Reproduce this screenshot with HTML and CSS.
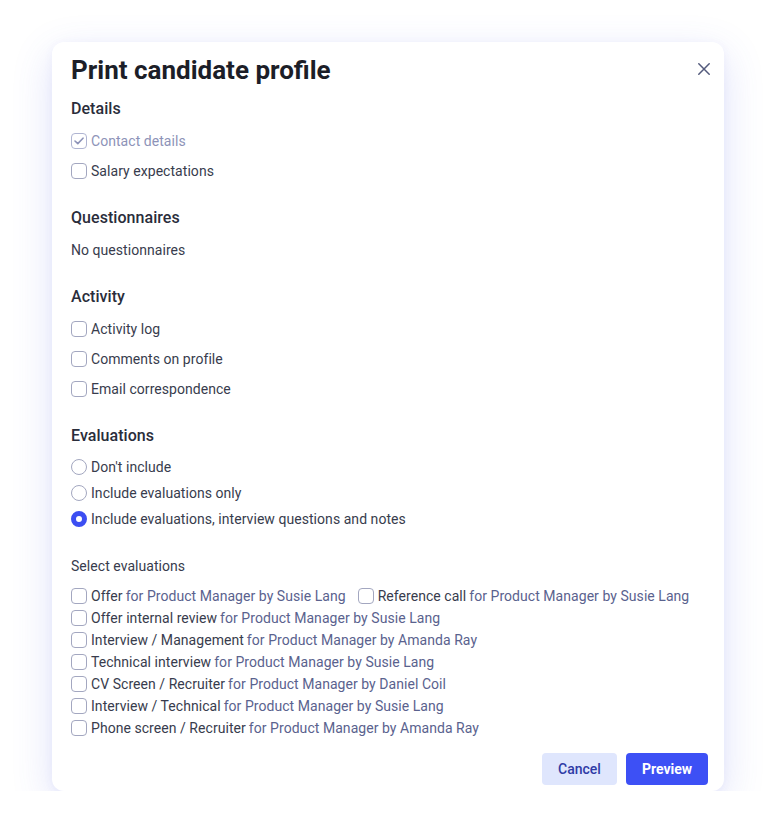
FILE: index.html
```html
<!DOCTYPE html>
<html lang="en">
<head>
<meta charset="utf-8">
<title>Print candidate profile</title>
<link rel="stylesheet" href="styles.css">
</head>
<body>
<div class="modal">
  <div class="modal-head">
    <h1 class="title">Print candidate profile</h1>
    <button class="close" aria-label="Close">
      <svg width="12" height="12" viewBox="0 0 12 12"><path d="M0.8 0.8L11.2 11.2M11.2 0.8L0.8 11.2" stroke="#535a7c" stroke-width="1.5" stroke-linecap="round"/></svg>
    </button>
  </div>

  <section class="section">
    <h2 class="heading">Details</h2>
    <div class="list">
      <label class="row disabled"><span class="box checked"><svg width="10" height="8" viewBox="0 0 10 8"><path d="M1 4L3.8 6.6L9 1.2" fill="none" stroke="#8d93b8" stroke-width="1.6" stroke-linecap="round" stroke-linejoin="round"/></svg></span>Contact details</label>
      <label class="row"><span class="box"></span>Salary expectations</label>
    </div>
  </section>

  <section class="section">
    <h2 class="heading">Questionnaires</h2>
    <div class="list">
      <p class="row">No questionnaires</p>
    </div>
  </section>

  <section class="section">
    <h2 class="heading">Activity</h2>
    <div class="list">
      <label class="row"><span class="box"></span>Activity log</label>
      <label class="row"><span class="box"></span>Comments on profile</label>
      <label class="row"><span class="box"></span>Email correspondence</label>
    </div>
  </section>

  <section class="section">
    <h2 class="heading">Evaluations</h2>
    <div class="radios">
      <label class="radio-row"><span class="radio"></span>Don't include</label>
      <label class="radio-row"><span class="radio"></span>Include evaluations only</label>
      <label class="radio-row"><span class="radio on"></span>Include evaluations, interview questions and notes</label>
    </div>
  </section>

  <section class="evals">
    <p class="sub">Select evaluations</p>
    <div class="eval-list">
      <div class="eval-line">
        <label class="eval"><span class="box"></span>Offer <span class="muted">for Product Manager by Susie Lang</span></label>
        <label class="eval"><span class="box"></span>Reference call <span class="muted">for Product Manager by Susie Lang</span></label>
      </div>
      <label class="eval"><span class="box"></span>Offer internal review <span class="muted">for Product Manager by Susie Lang</span></label>
      <label class="eval"><span class="box"></span>Interview / Management <span class="muted">for Product Manager by Amanda Ray</span></label>
      <label class="eval"><span class="box"></span>Technical interview <span class="muted">for Product Manager by Susie Lang</span></label>
      <label class="eval"><span class="box"></span>CV Screen / Recruiter <span class="muted">for Product Manager by Daniel Coil</span></label>
      <label class="eval"><span class="box"></span>Interview / Technical <span class="muted">for Product Manager by Susie Lang</span></label>
      <label class="eval"><span class="box"></span>Phone screen / Recruiter <span class="muted">for Product Manager by Amanda Ray</span></label>
    </div>
  </section>

  <div class="actions">
    <button class="btn btn-cancel">Cancel</button>
    <button class="btn btn-primary">Preview</button>
  </div>
</div>
</body>
</html>
```

FILE: styles.css
```css
* { box-sizing: border-box; }
html, body { margin: 0; padding: 0; background: #ffffff; }
body {
  font-family: Roboto, "Noto Sans", "Liberation Sans", sans-serif;
  color: #383c4d;
  font-size: 14px;
  letter-spacing: 0.05px;
}
.modal {
  width: 672px;
  margin: 42px 0 0 52px;
  background: #fff;
  border-radius: 12px;
  padding: 12px 16px 6px 19px;
  box-shadow: 0 12px 40px rgba(80, 92, 225, 0.18), 0 2px 10px rgba(80, 92, 225, 0.06);
}
.modal-head {
  display: flex;
  justify-content: space-between;
  align-items: center;
  height: 32px;
}
.title {
  margin: 0;
  font-size: 26px;
  line-height: 32px;
  font-weight: 700;
  color: #1c1e28;
  letter-spacing: 0;
}
.close {
  border: 0;
  background: none;
  padding: 0;
  width: 12px;
  height: 12px;
  margin-right: -2px;
  margin-top: -3px;
  display: flex;
}
.section { margin-top: 11px; }
.section + .section { margin-top: 20px; }
.heading {
  margin: 0;
  font-size: 16px;
  line-height: 24px;
  font-weight: 500;
  color: #2a2d3b;
}
.list { margin-top: 5px; display: flex; flex-direction: column; }
.row {
  margin: 0;
  height: 30px;
  display: flex;
  align-items: center;
  gap: 4px;
  line-height: 20px;
}
.row.disabled { color: #8d93b8; }
.box {
  width: 16px;
  height: 16px;
  border: 1px solid #a3a7c0;
  border-radius: 4px;
  flex: none;
  display: inline-flex;
  align-items: center;
  justify-content: center;
  background: #fff;
}
.box.checked { border-color: #b0b5d2; }
.radios { margin-top: 6px; display: flex; flex-direction: column; }
.radio-row {
  height: 26px;
  display: flex;
  align-items: center;
  gap: 4px;
}
.radio {
  width: 16px;
  height: 16px;
  border: 1px solid #a3a7c0;
  border-radius: 50%;
  flex: none;
}
.radio.on {
  border: 5px solid #3c4ef2;
  background: #fff;
}
.evals { margin-top: 24px; }
.sub { margin: 0; line-height: 20px; }
.eval-list { margin-top: 9px; display: flex; flex-direction: column; }
.eval-line { display: flex; gap: 12px; }
.eval {
  height: 22px;
  display: flex;
  align-items: center;
  gap: 4px;
  white-space: nowrap;
}
.muted { color: #5a628e; margin-left: -1px; }
.actions {
  margin-top: 14px;
  display: flex;
  justify-content: flex-end;
  gap: 9px;
}
.btn {
  height: 32px;
  border: 0;
  border-radius: 4px;
  font-family: inherit;
  font-size: 14px;
  font-weight: 500;
  cursor: pointer;
}
.btn-cancel { width: 75px; background: #dfe6fd; color: #2f3ba6; }
.btn-primary { width: 82px; background: #3d50f5; color: #fff; font-weight: 700; }
```
